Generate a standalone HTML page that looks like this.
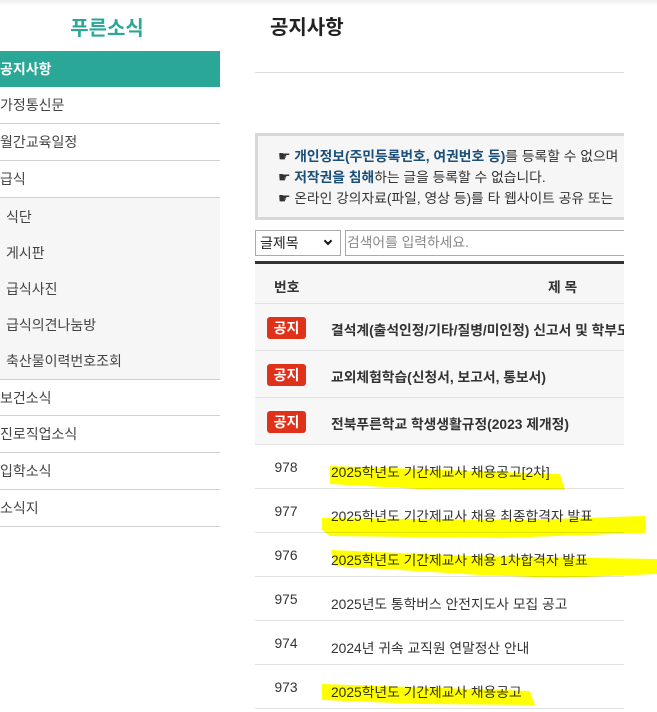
<!DOCTYPE html>
<html><head><meta charset="utf-8"><style>
*{margin:0;padding:0;box-sizing:border-box}
body{width:657px;height:712px;overflow:hidden;background:#fff;font-family:"Liberation Sans","Noto Sans CJK KR",sans-serif;color:#333;position:relative}
.a{position:absolute}
.side .it{position:absolute;left:0;width:220px;height:37px;border-bottom:1px solid #d0d0d0;font-size:14px;line-height:36px;color:#444}
.sub{position:absolute;left:0;width:220px;font-size:14px;color:#444;padding-left:6px}
.row{position:absolute;left:255px;width:369px;border-bottom:1px solid #e2e2e2;font-size:13.8px;overflow:hidden}
.num{position:absolute;left:0;width:62px;text-align:center}
.tt{position:absolute;left:76px;white-space:nowrap}
.bd{position:absolute;left:12px;width:39px;height:22px;background:#e0321a;color:#fff;font-weight:bold;font-size:14px;text-align:center;line-height:22px;border-radius:3px}
</style></head><body>
<div class="a" style="left:0;top:0;width:657px;height:6px;background:linear-gradient(#eee,#fff)"></div>
<div class="a" style="left:0;width:214px;top:12px;text-align:center;font-size:20px;font-weight:bold;color:#2aa796">푸른소식</div>
<div class="side">
<div class="it" style="top:51px;height:36px;background:#2aa796;color:#fff;font-weight:bold;border:none">공지사항</div>
<div class="it" style="top:87px">가정통신문</div>
<div class="it" style="top:124px">월간교육일정</div>
<div class="it" style="top:161px">급식</div>
<div class="a" style="top:198px;left:0;width:220px;height:182px;background:#f6f6f6;border-bottom:1px solid #d0d0d0"></div>
<div class="sub" style="top:207px">식단</div>
<div class="sub" style="top:243px">게시판</div>
<div class="sub" style="top:279px">급식사진</div>
<div class="sub" style="top:315px">급식의견나눔방</div>
<div class="sub" style="top:351px">축산물이력번호조회</div>
<div class="it" style="top:380px;height:36px">보건소식</div>
<div class="it" style="top:416px">진로직업소식</div>
<div class="it" style="top:453px">입학소식</div>
<div class="it" style="top:490px">소식지</div>
</div>
<div class="a" style="left:270px;top:11px;font-size:20px;font-weight:bold;color:#222">공지사항</div>
<div class="a" style="left:255px;top:72px;width:369px;height:1px;background:#ddd"></div>
<div class="a" style="left:255px;top:133px;width:369px;height:87px;background:#f6f6f6;border:3px solid #d8d8d8;border-right:none;font-size:13.8px;line-height:21px;padding:10px 0 0 20px;white-space:nowrap;overflow:hidden;color:#333">
<div>☛ <b style="color:#1a4f7a">개인정보(주민등록번호, 여권번호 등)</b>를 등록할 수 없으며</div>
<div>☛ <b style="color:#1a4f7a">저작권을 침해</b>하는 글을 등록할 수 없습니다.</div>
<div>☛ 온라인 강의자료(파일, 영상 등)를 타 웹사이트 공유 또는</div>
</div>
<div class="a" style="left:255px;top:230px;width:86px;height:26px;border:1px solid #aaa;font-size:14px;line-height:24px;padding-left:4px;color:#222">글제목<span style="position:absolute;right:9px;top:7px;width:6px;height:6px;border-right:2px solid #111;border-bottom:2px solid #111;transform:rotate(45deg)"></span></div>
<div class="a" style="left:345px;top:230px;width:279px;height:26px;border:1px solid #aaa;border-right:none;font-size:13.8px;line-height:24px;padding-left:1px;color:#888">검색어를 입력하세요.</div>
<div class="a" style="left:255px;top:261px;width:369px;height:43px;background:#f6f6f6;border-top:3px solid #333;border-bottom:1px solid #e2e2e2;font-size:13.8px;font-weight:bold;color:#333">
<span class="a" style="left:19px;top:12px">번호</span><span class="a" style="left:293px;top:12px">제 목</span></div>
<div class="row" style="top:304px;height:47px;background:#f7f7f7;font-weight:bold"><div class="bd" style="top:13px">공지</div><div class="tt" style="top:15px">결석계(출석인정/기타/질병/미인정) 신고서 및 학부모</div></div>
<div class="row" style="top:351px;height:47px;background:#f7f7f7;font-weight:bold"><div class="bd" style="top:13px">공지</div><div class="tt" style="top:15px">교외체험학습(신청서, 보고서, 통보서)</div></div>
<div class="row" style="top:398px;height:47px;background:#f7f7f7;font-weight:bold"><div class="bd" style="top:13px">공지</div><div class="tt" style="top:15px">전북푸른학교 학생생활규정(2023 제개정)</div></div>
<div class="row" style="top:445px;height:44px"><div class="num" style="top:15px">978</div><div class="tt" style="top:16px">2025학년도 기간제교사 채용공고[2차]</div></div>
<div class="row" style="top:489px;height:44px"><div class="num" style="top:15px">977</div><div class="tt" style="top:16px">2025학년도 기간제교사 채용 최종합격자 발표</div></div>
<div class="row" style="top:533px;height:44px"><div class="num" style="top:15px">976</div><div class="tt" style="top:16px">2025학년도 기간제교사 채용 1차합격자 발표</div></div>
<div class="row" style="top:577px;height:44px"><div class="num" style="top:15px">975</div><div class="tt" style="top:16px">2025년도 통학버스 안전지도사 모집 공고</div></div>
<div class="row" style="top:621px;height:44px"><div class="num" style="top:15px">974</div><div class="tt" style="top:16px">2024년 귀속 교직원 연말정산 안내</div></div>
<div class="row" style="top:665px;height:44px"><div class="num" style="top:15px">973</div><div class="tt" style="top:16px">2025학년도 기간제교사 채용공고</div></div>
<svg class="a" style="left:0;top:0;mix-blend-mode:multiply" width="657" height="712">
<g fill="#ffff00">
<path d="M330 466 L560 474 L565 490 L420 489 L330 484 Z"/>
<path d="M322 518 L520 520 L645 516 L645 533 L500 538 L330 536 L322 530 Z"/>
<path d="M331 550 L470 556 L657 559 L657 574 L560 578 L480 575 L335 566 Z"/>
<path d="M322 684 L530 691 L535 705 L420 704 L322 700 Z"/>
</g></svg>
</body></html>
